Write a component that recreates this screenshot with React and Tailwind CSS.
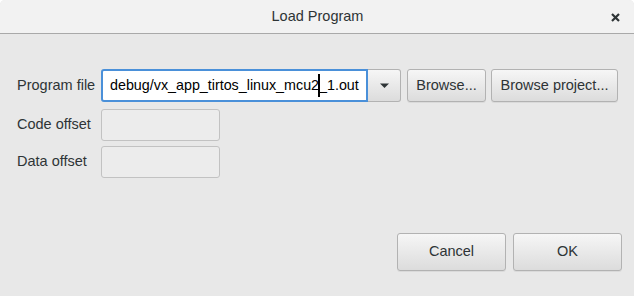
import React from "react";

const btn =
  "h-full rounded-[3px] border border-[#b2b2b2] bg-gradient-to-b from-[#f6f6f6] to-[#dcdcdc] text-[#2e3436] text-[14.5px] shadow-[0_1px_0_rgba(0,0,0,0.06)]";

export default function App() {
  return (
    <div
      className="w-[634px] h-[296px] flex flex-col bg-[#e8e8e8] overflow-hidden rounded-t-[5px]"
      style={{ fontFamily: '"Liberation Sans", Arial, sans-serif' }}
    >
      {/* title bar */}
      <div className="h-[34px] shrink-0 flex items-center bg-[#f2f2f2] border-b border-[#a9a9a9] relative">
        <div className="flex-1 text-center text-[14.5px] text-[#2e3436] pl-[1px]">
          Load Program
        </div>
        <button className="absolute right-[14px] top-[12px] w-[10px] h-[10px] flex items-center justify-center">
          <svg width="9" height="9" viewBox="0 0 9 9">
            <path d="M1 1L8 8M8 1L1 8" stroke="#2e3436" strokeWidth="2.2" />
          </svg>
        </button>
      </div>

      {/* form */}
      <div className="flex flex-col pl-[17px] pt-[35px]">
        <div className="flex items-center h-[33px]">
          <div className="w-[84px] text-[14.5px] text-[#2e3436]">Program file</div>
          <div className="flex h-full">
            <div className="w-[267px] h-full border-2 border-[#4a90d9] rounded-l-[3px] bg-white flex items-center pl-[7px] text-[14.3px] text-black whitespace-nowrap">
              debug/vx_app_tirtos_linux_mcu2
              <span className="inline-block w-[2px] h-[23px] bg-black -mx-[1px]" />
              _1.out
            </div>
            <div className="w-[33px] h-full border border-l-0 border-[#b2b2b2] rounded-r-[3px] bg-gradient-to-b from-[#f6f6f6] to-[#dcdcdc] flex items-center justify-center">
              <svg width="9" height="5" viewBox="0 0 9 5">
                <path d="M0 0.5H9L4.5 5Z" fill="#2e3436" />
              </svg>
            </div>
          </div>
          <div className="flex h-full gap-[5px] ml-[6px]">
            <button className={`${btn} w-[79px]`}>Browse...</button>
            <button className={`${btn} w-[127px]`}>Browse project...</button>
          </div>
        </div>

        <div className="flex items-center h-[32px] mt-[7px]">
          <div className="w-[84px] text-[14.5px] text-[#2e3436]">Code offset</div>
          <div className="w-[119px] h-full border border-[#c2c2c2] rounded-[3px] bg-[#ececec]" />
        </div>

        <div className="flex items-center h-[32px] mt-[5px]">
          <div className="w-[84px] text-[14.5px] text-[#2e3436]">Data offset</div>
          <div className="w-[119px] h-full border border-[#c2c2c2] rounded-[3px] bg-[#ececec]" />
        </div>
      </div>

      {/* actions */}
      <div className="flex justify-end gap-[7px] pr-[12px] mt-[55px] h-[38px]">
        <button className={`${btn} w-[109px]`}>Cancel</button>
        <button className={`${btn} w-[109px]`}>OK</button>
      </div>
    </div>
  );
}
